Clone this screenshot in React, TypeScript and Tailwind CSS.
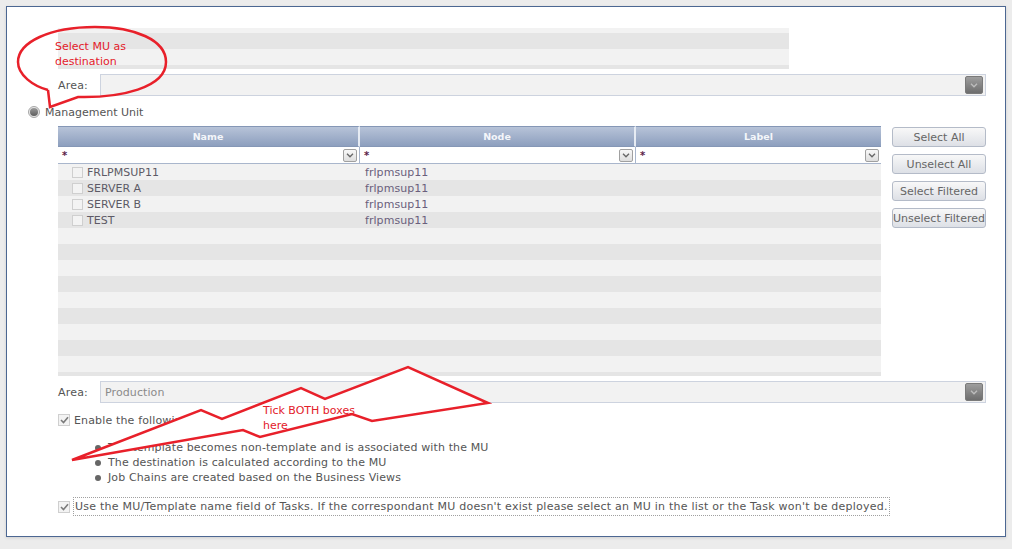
import React from "react";

const FONT = { fontFamily: '"DejaVu Sans", Verdana, sans-serif' };

function Chevron({ color = "currentColor" }: { color?: string }) {
  return (
    <svg width="8" height="5" viewBox="0 0 8 5">
      <path d="M1 0.8 L4 3.8 L7 0.8" fill="none" stroke={color} strokeWidth="1.3" />
    </svg>
  );
}

function CheckBox({ checked, size = 12 }: { checked?: boolean; size?: number }) {
  return (
    <div
      className="shrink-0 border border-[#cfcfcf] bg-[#f3f3f3] flex items-center justify-center"
      style={{ width: size, height: size }}
    >
      {checked && (
        <svg width="9" height="8" viewBox="0 0 9 8">
          <path d="M1 4 L3.5 6.5 L8 1.2" fill="none" stroke="#7a7a7a" strokeWidth="1.6" />
        </svg>
      )}
    </div>
  );
}

function AreaSelect({ value }: { value?: string }) {
  return (
    <div className="flex items-center h-[22px] ml-[51px] w-[928px]">
      <div className="w-[42px] text-[11px] text-[#555] relative top-[1px] tracking-[0.2px]">Area:</div>
      <div className="flex-1 h-[22px] bg-[#f2f2f2] border border-[#cdd3df] flex items-center justify-between pl-[4px] pr-[2px]">
        <span className="text-[11px] text-[#8a8a8a] relative top-[1px] tracking-[0.1px]">{value}</span>
        <div className="w-[18px] h-[18px] rounded-[2px] bg-gradient-to-b from-[#9e9e9e] to-[#6e6e6e] border border-[#7a7a7a] flex items-center justify-center">
          <Chevron color="#bdbdbd" />
        </div>
      </div>
    </div>
  );
}

const COLS = [302, 276, 245];
const HEAD = ["Name", "Node", "Label"];
const ROWS: { name: string; node: string }[] = [
  { name: "FRLPMSUP11", node: "frlpmsup11" },
  { name: "SERVER A", node: "frlpmsup11" },
  { name: "SERVER B", node: "frlpmsup11" },
  { name: "TEST", node: "frlpmsup11" },
];

function Grid() {
  const all = [...ROWS, ...Array.from({ length: 10 }, () => null)];
  return (
    <div className="w-[823px]">
      <div className="flex h-[21px]">
        {HEAD.map((h, i) => (
          <div
            key={h}
            className={
              "h-[21px] flex items-center justify-center bg-gradient-to-b from-[#b7c3d8] to-[#8d9fbe] border-t border-b border-[#8597b6] " +
              (i < 2 ? "border-r-2 border-r-[#e6ebf3]" : "")
            }
            style={{ width: COLS[i] }}
          >
            <span className="text-[9.5px] font-bold text-[#f4f6fa] relative top-[1px]">{h}</span>
          </div>
        ))}
      </div>
      <div className="flex h-[17px]">
        {COLS.map((w, i) => (
          <div
            key={i}
            className={
              "h-[17px] bg-white border-b border-[#a9b6cc] flex items-center justify-between pl-[4px] pr-[2px] " +
              (i < 2 ? "border-r border-r-[#a9b6cc]" : "")
            }
            style={{ width: w }}
          >
            <span className="text-[10px] font-bold text-[#5b1d48] leading-none relative top-[1px]">*</span>
            <div className="w-[14px] h-[13px] rounded-[2px] border border-[#a0a0a0] bg-gradient-to-b from-[#f8f8f8] to-[#dedede] flex items-center justify-center">
              <Chevron color="#666" />
            </div>
          </div>
        ))}
      </div>
      <div className="h-[212px] overflow-hidden">
        {all.map((r, idx) => (
          <div
            key={idx}
            className={"h-[16px] flex items-center " + (idx % 2 === 0 ? "bg-[#f2f2f2]" : "bg-[#e5e5e5]")}
          >
            {r && (
              <>
                <div className="w-[302px] pl-[14px] flex items-center gap-[4px]">
                  <CheckBox size={11} />
                  <span className="text-[11px] text-[#5d5a66] relative top-[1px]">{r.name}</span>
                </div>
                <div className="w-[276px] pl-[5px] text-[11px] text-[#6a5f7c] relative top-[1px] tracking-[0.05px]">{r.node}</div>
              </>
            )}
          </div>
        ))}
      </div>
    </div>
  );
}

function Btn({ children }: { children: React.ReactNode }) {
  return (
    <div className="h-[20px] w-[94px] rounded-[3px] border border-[#b4bbc8] bg-gradient-to-b from-[#f8f8f8] to-[#dde0e6] flex items-center justify-center text-[11px] text-[#666] whitespace-nowrap">
      <span className="relative top-[1px]">{children}</span>
    </div>
  );
}

export default function App() {
  return (
    <div className="relative w-[1012px] h-[549px] bg-[#ececec] pt-[6px] pl-[6px] overflow-hidden" style={FONT}>
      <div className="w-[1000px] h-[531px] bg-white border border-[#4c6792] shadow-[0_1px_3px_rgba(0,0,0,0.12)]">
        {/* top striped block */}
        <div className="mt-[21px] ml-[51px] w-[731px]">
          <div className="h-[5px] bg-[#f2f2f2]" />
          <div className="h-[16px] bg-[#e5e5e5]" />
          <div className="h-[16px] bg-[#f2f2f2]" />
          <div className="h-[4px] bg-[#e5e5e5]" />
        </div>

        <div className="mt-[5px]">
          <AreaSelect />
        </div>

        {/* radio */}
        <div className="mt-[6px] h-[20px] ml-[21px] flex items-center gap-[5px]">
          <div className="w-[12px] h-[12px] rounded-full border border-[#a8a8a8] bg-[#e6e6e6] flex items-center justify-center">
            <div className="w-[8px] h-[8px] rounded-full bg-gradient-to-b from-[#9a9a9a] to-[#5e5e5e]" />
          </div>
          <span className="text-[11px] text-[#555] relative top-[1px]">Management Unit</span>
        </div>

        {/* grid + buttons */}
        <div className="mt-[4px] ml-[51px] flex gap-[11px]">
          <Grid />
          <div className="mt-[1px] flex flex-col gap-[7px]">
            <Btn>Select All</Btn>
            <Btn>Unselect All</Btn>
            <Btn>Select Filtered</Btn>
            <Btn>Unselect Filtered</Btn>
          </div>
        </div>

        <div className="mt-[5px]">
          <AreaSelect value="Production" />
        </div>

        <div className="mt-[9px] h-[16px] ml-[51px] flex items-center gap-[4px]">
          <CheckBox checked />
          <span className="text-[11px] text-[#555] relative top-[1px] tracking-[0.15px]">Enable the following features:</span>
        </div>

        <div className="mt-[12px] ml-[88px]">
          {[
            "The template becomes non-template and is associated with the MU",
            "The destination is calculated according to the MU",
            "Job Chains are created based on the Business Views",
          ].map((t) => (
            <div key={t} className="h-[15px] flex items-center gap-[7px]">
              <div className="w-[6px] h-[6px] rounded-full bg-[#666]" />
              <span className="text-[11px] text-[#555] relative top-[1px] tracking-[0.12px]">{t}</span>
            </div>
          ))}
        </div>

        <div className="mt-[12px] h-[19px] ml-[51px] flex items-center">
          <CheckBox checked />
          <span className="ml-[3px] h-[19px] flex items-center px-[1px] border border-dotted border-[#a0a0a0] text-[11px] text-[#555] whitespace-nowrap tracking-[0.23px]">
            <span className="relative top-[1px]">
              Use the MU/Template name field of Tasks. If the correspondant MU doesn't exist please select an MU in the list or the Task won't be deployed.
            </span>
          </span>
        </div>
      </div>

      {/* annotations */}
      <svg className="absolute left-0 top-0 pointer-events-none" width="1012" height="549" viewBox="0 0 1012 549">
        <path
          d="M48 90 L50 107 L78 97 C120 98 166 88 166 62 C166 40 135 27 95 27 C50 27 18 42 18 62 C18 75 33 86 48 90"
          fill="none"
          stroke="#e8202a"
          strokeWidth="2.5"
        />
        <polygon
          points="72,460 201,410 222,419 301,388 325,399 408,367 488,403 372,421 352,414 260,437 243,430"
          fill="white"
          stroke="#e8202a"
          strokeWidth="2.5"
        />
      </svg>
      <div className="absolute left-[55px] top-[39px] text-[11px] leading-[15px] text-[#e3202a]">
        Select MU as
        <br />
        destination
      </div>
      <div className="absolute left-[263px] top-[403px] text-[11px] leading-[15px] text-[#e3202a]">
        Tick BOTH boxes
        <br />
        here
      </div>
    </div>
  );
}
